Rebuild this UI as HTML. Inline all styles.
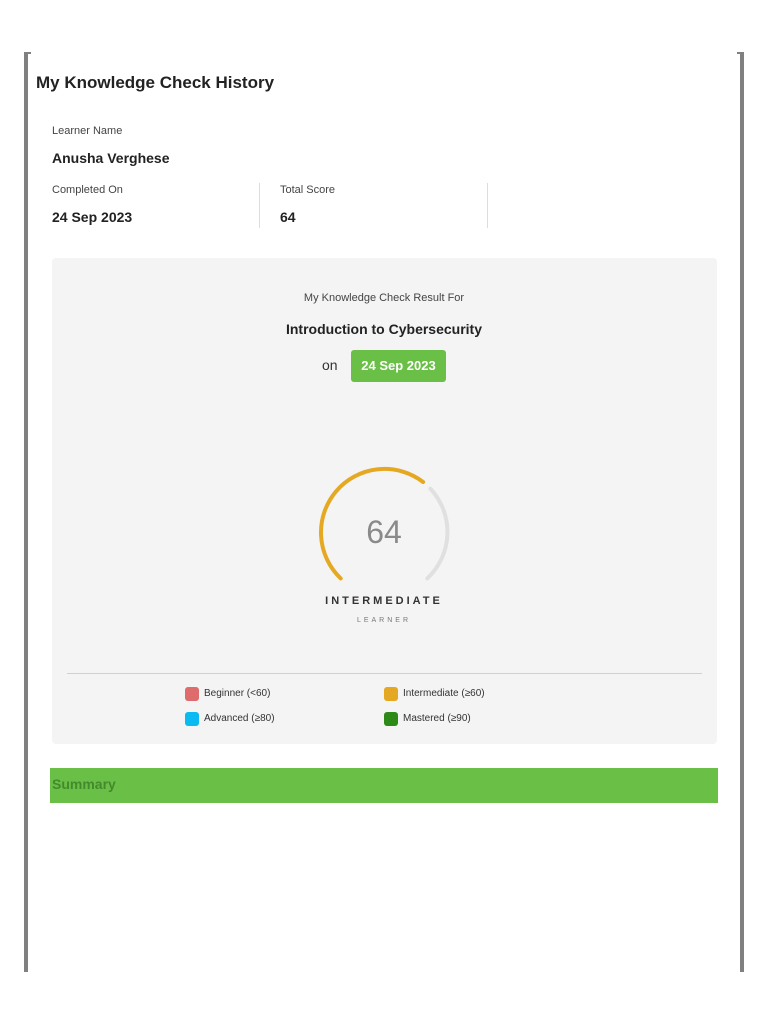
<!DOCTYPE html>
<html><head><meta charset="utf-8"><style>
body{margin:0;width:768px;height:1024px;background:#fff;font-family:"Liberation Sans",Arial,sans-serif;color:#222;position:relative;overflow:hidden}
.abs{position:absolute}
.bar{position:absolute;top:52px;height:920px;width:4px;background:#808080}
h1{position:absolute;left:36px;top:73px;margin:0;font-size:17px;font-weight:bold;color:#222}
.lbl{position:absolute;font-size:11px;color:#444}
.val{position:absolute;font-size:14px;font-weight:bold;color:#222}
.card{position:absolute;left:52px;top:258px;width:665px;height:486px;background:#f4f4f4;border-radius:4px}
.sw{position:absolute;width:14px;height:14px;border-radius:3px}
.lt{position:absolute;font-size:10px;color:#333}
</style></head><body>
<div class="bar" style="left:24px"></div>
<div class="abs" style="left:24px;top:52px;width:7px;height:2px;background:#808080"></div>
<div class="bar" style="left:740px"></div>
<div class="abs" style="left:737px;top:52px;width:7px;height:2px;background:#808080"></div>
<h1>My Knowledge Check History</h1>
<div class="lbl" style="left:52px;top:125px">Learner Name</div>
<div class="val" style="left:52px;top:150px">Anusha Verghese</div>
<div class="lbl" style="left:52px;top:184px">Completed On</div>
<div class="val" style="left:52px;top:209px">24 Sep 2023</div>
<div class="abs" style="left:259px;top:183px;width:1px;height:45px;background:#ddd"></div>
<div class="lbl" style="left:280px;top:184px">Total Score</div>
<div class="val" style="left:280px;top:209px">64</div>
<div class="abs" style="left:487px;top:183px;width:1px;height:45px;background:#ddd"></div>
<div class="card"></div>
<div class="abs" style="left:0;width:768px;text-align:center;top:292px;font-size:11px;color:#444">My Knowledge Check Result For</div>
<div class="abs" style="left:0;width:768px;text-align:center;top:321px;font-size:14px;font-weight:bold;color:#222">Introduction to Cybersecurity</div>
<div class="abs" style="left:322px;top:357px;font-size:14px;color:#333">on</div>
<div class="abs" style="left:351px;top:350px;width:95px;height:32px;background:#6abf47;border-radius:3px;color:#fff;font-size:13px;font-weight:bold;text-align:center;line-height:32px">24 Sep 2023</div>
<svg class="abs" style="left:0;top:0" width="768" height="1024">
<path d="M340.7 578.4 A63.5 63.5 0 0 1 423.1 482" fill="none" stroke="#e5a823" stroke-width="4" stroke-linecap="round"/>
<path d="M430.4 488.7 A63.5 63.5 0 0 1 427.3 578.4" fill="none" stroke="#e0e0e0" stroke-width="4" stroke-linecap="round"/>
<text x="384" y="543" text-anchor="middle" font-family="Liberation Sans" font-size="32" fill="#8a8a8a">64</text>
</svg>
<div class="abs" style="left:0;width:768px;text-align:center;top:595px;font-size:11px;font-weight:bold;letter-spacing:3px;color:#333">INTERMEDIATE</div>
<div class="abs" style="left:0;width:768px;text-align:center;top:617px;font-size:7px;letter-spacing:3px;color:#777">LEARNER</div>
<div class="abs" style="left:67px;top:673px;width:635px;height:1px;background:#d0d0d0"></div>
<div class="sw" style="left:185px;top:687px;background:#de6c6c"></div><div class="lt" style="left:204px;top:688px">Beginner (&lt;60)</div>
<div class="sw" style="left:384px;top:687px;background:#e5a823"></div><div class="lt" style="left:403px;top:688px">Intermediate (≥60)</div>
<div class="sw" style="left:185px;top:712px;background:#0bbaf0"></div><div class="lt" style="left:204px;top:713px">Advanced (≥80)</div>
<div class="sw" style="left:384px;top:712px;background:#2e8a16"></div><div class="lt" style="left:403px;top:713px">Mastered (≥90)</div>
<div class="abs" style="left:50px;top:768px;width:668px;height:35px;background:#6abf47"></div>
<div class="abs" style="left:52px;top:776px;font-size:14px;font-weight:bold;color:#428a2c">Summary</div>
</body></html>
